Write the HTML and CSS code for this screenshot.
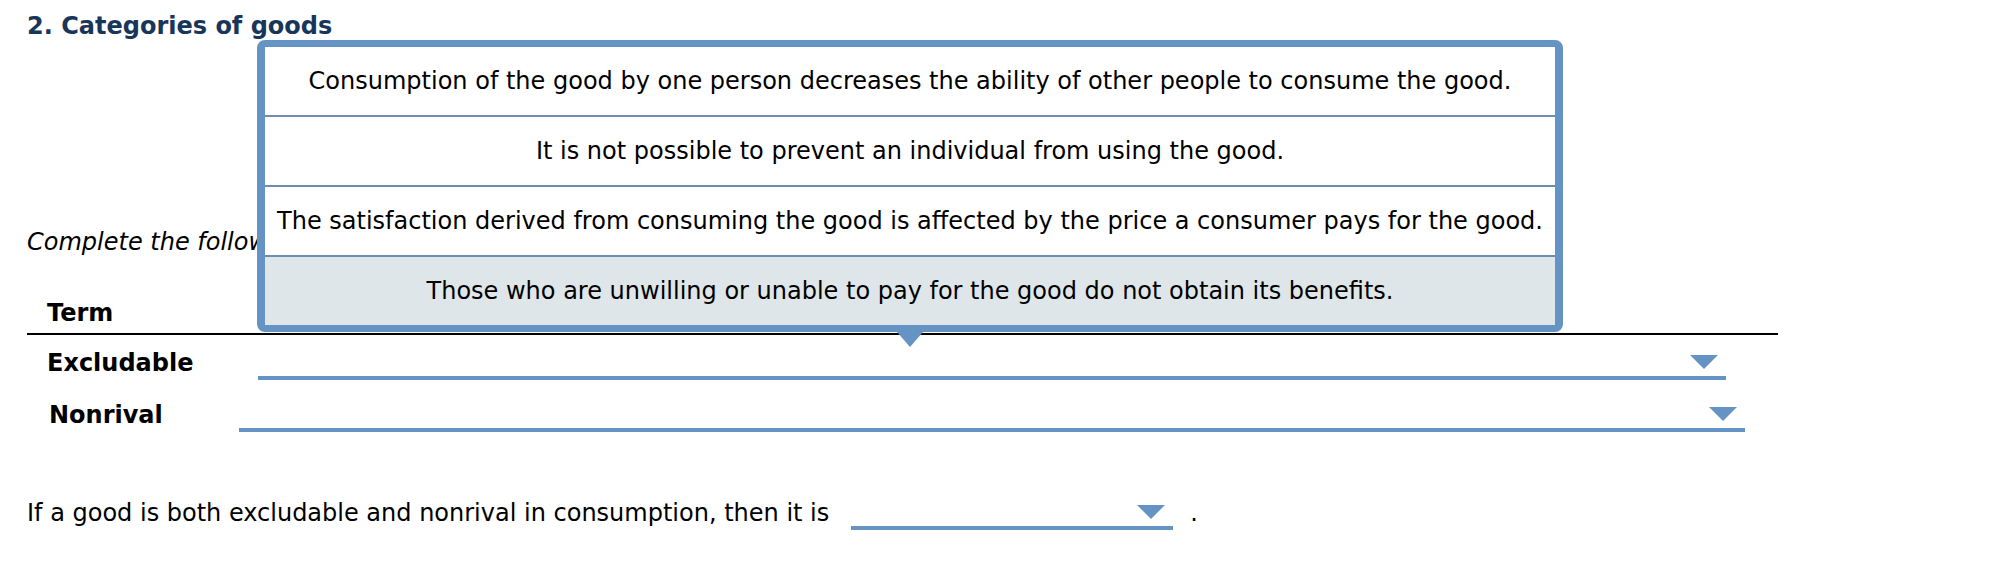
FILE: index.html
```html
<!DOCTYPE html>
<html>

<head>
  <title>Categories of goods</title>
  <meta charset="utf-8">
  <link rel="stylesheet" href="styles.css">
</head>

<body>
  <div class="page">
    <h2 class="question-title">2. Categories of goods</h2>

    <p class="prompt">Complete the following table by choosing the definition that matches each term.</p>

    <div class="term-table">
      <div class="term-head">Term</div>
      <div class="term-head def-head"></div>

      <div class="term-name">Excludable</div>
      <div class="term-answer">
        <div class="dropdown dropdown-excludable open">
          <span class="dropdown-arrow"></span>
        </div>
      </div>

      <div class="term-name term-nonrival">Nonrival</div>
      <div class="term-answer">
        <div class="dropdown dropdown-nonrival">
          <span class="dropdown-arrow"></span>
        </div>
      </div>
    </div>

    <div class="sentence">
      <span>If a good is both excludable and nonrival in consumption, then it is</span>
      <div class="dropdown dropdown-inline">
        <span class="dropdown-arrow"></span>
      </div>
      <span>.</span>
    </div>

    <!-- options menu of the open Excludable dropdown -->
    <div class="options-menu">
      <div class="option">Consumption of the good by one person decreases the ability of other people to consume the good.</div>
      <div class="option">It is not possible to prevent an individual from using the good.</div>
      <div class="option">The satisfaction derived from consuming the good is affected by the price a consumer pays for the good.</div>
      <div class="option option-hover">Those who are unwilling or unable to pay for the good do not obtain its benefits.</div>
      <span class="menu-pointer"></span>
    </div>
  </div>
</body>

</html>
```

FILE: styles.css
```css
body {
  margin: 0;
  background: #fff;
  color: #000;
  font-family: "DejaVu Sans", Verdana, sans-serif;
  font-size: 24px;
  line-height: 28px;
}

.page {
  position: relative;
  width: 2002px;
  min-height: 572px;
  padding: 12px 0 0 27px;
  box-sizing: border-box;
}

.question-title {
  margin: 0;
  font-size: 24px;
  line-height: 28px;
  font-weight: bold;
  color: #183659;
}

.prompt {
  margin: 188px 0 0 0;
  font-style: italic;
}

.term-table {
  display: grid;
  grid-template-columns: 179px 1572px;
  margin-top: 43px;
}

.term-head {
  padding: 0 0 6px 20px;
  font-weight: bold;
  border-bottom: 2px solid #000;
}

.def-head {
  padding-left: 0;
}

.term-name {
  padding: 14px 0 10px 20px;
  font-weight: bold;
}

.term-nonrival {
  padding-left: 22px;
}

.term-answer {
  display: flex;
  justify-content: center;
  align-items: flex-start;
}

.dropdown {
  display: flex;
  justify-content: flex-end;
  align-items: flex-end;
  height: 32px;
  padding: 0 8px 7px 0;
  border-bottom: 4px solid #6593c3;
}

.term-answer .dropdown {
  margin-top: 9px;
  height: 25px;
}

.dropdown-excludable {
  width: 1460px;
}

.dropdown-nonrival {
  width: 1498px;
}

.dropdown-arrow {
  width: 0;
  height: 0;
  border-left: 14px solid transparent;
  border-right: 14px solid transparent;
  border-top: 14px solid #6593c3;
}

.sentence {
  display: flex;
  align-items: flex-start;
  margin-top: 60px;
}

.dropdown-inline {
  width: 314px;
  height: 19px;
  margin: 1px 17px 0 22px;
}

.options-menu {
  position: absolute;
  left: 257px;
  top: 40px;
  width: 1306px;
  box-sizing: border-box;
  border: 7px solid #6593c3;
  border-left-width: 8px;
  border-right-width: 8px;
  border-radius: 8px;
  background: #fff;
}

.option {
  height: 68px;
  display: flex;
  align-items: center;
  justify-content: center;
  text-align: center;
  border-bottom: 2px solid #6c8db0;
}

.option:last-of-type {
  border-bottom: none;
}

.option-hover {
  background-color: #dfe6e9;
}

.menu-pointer {
  position: absolute;
  left: 632px;
  bottom: -22px;
  width: 0;
  height: 0;
  border-left: 13px solid transparent;
  border-right: 13px solid transparent;
  border-top: 15px solid #6593c3;
}
```
